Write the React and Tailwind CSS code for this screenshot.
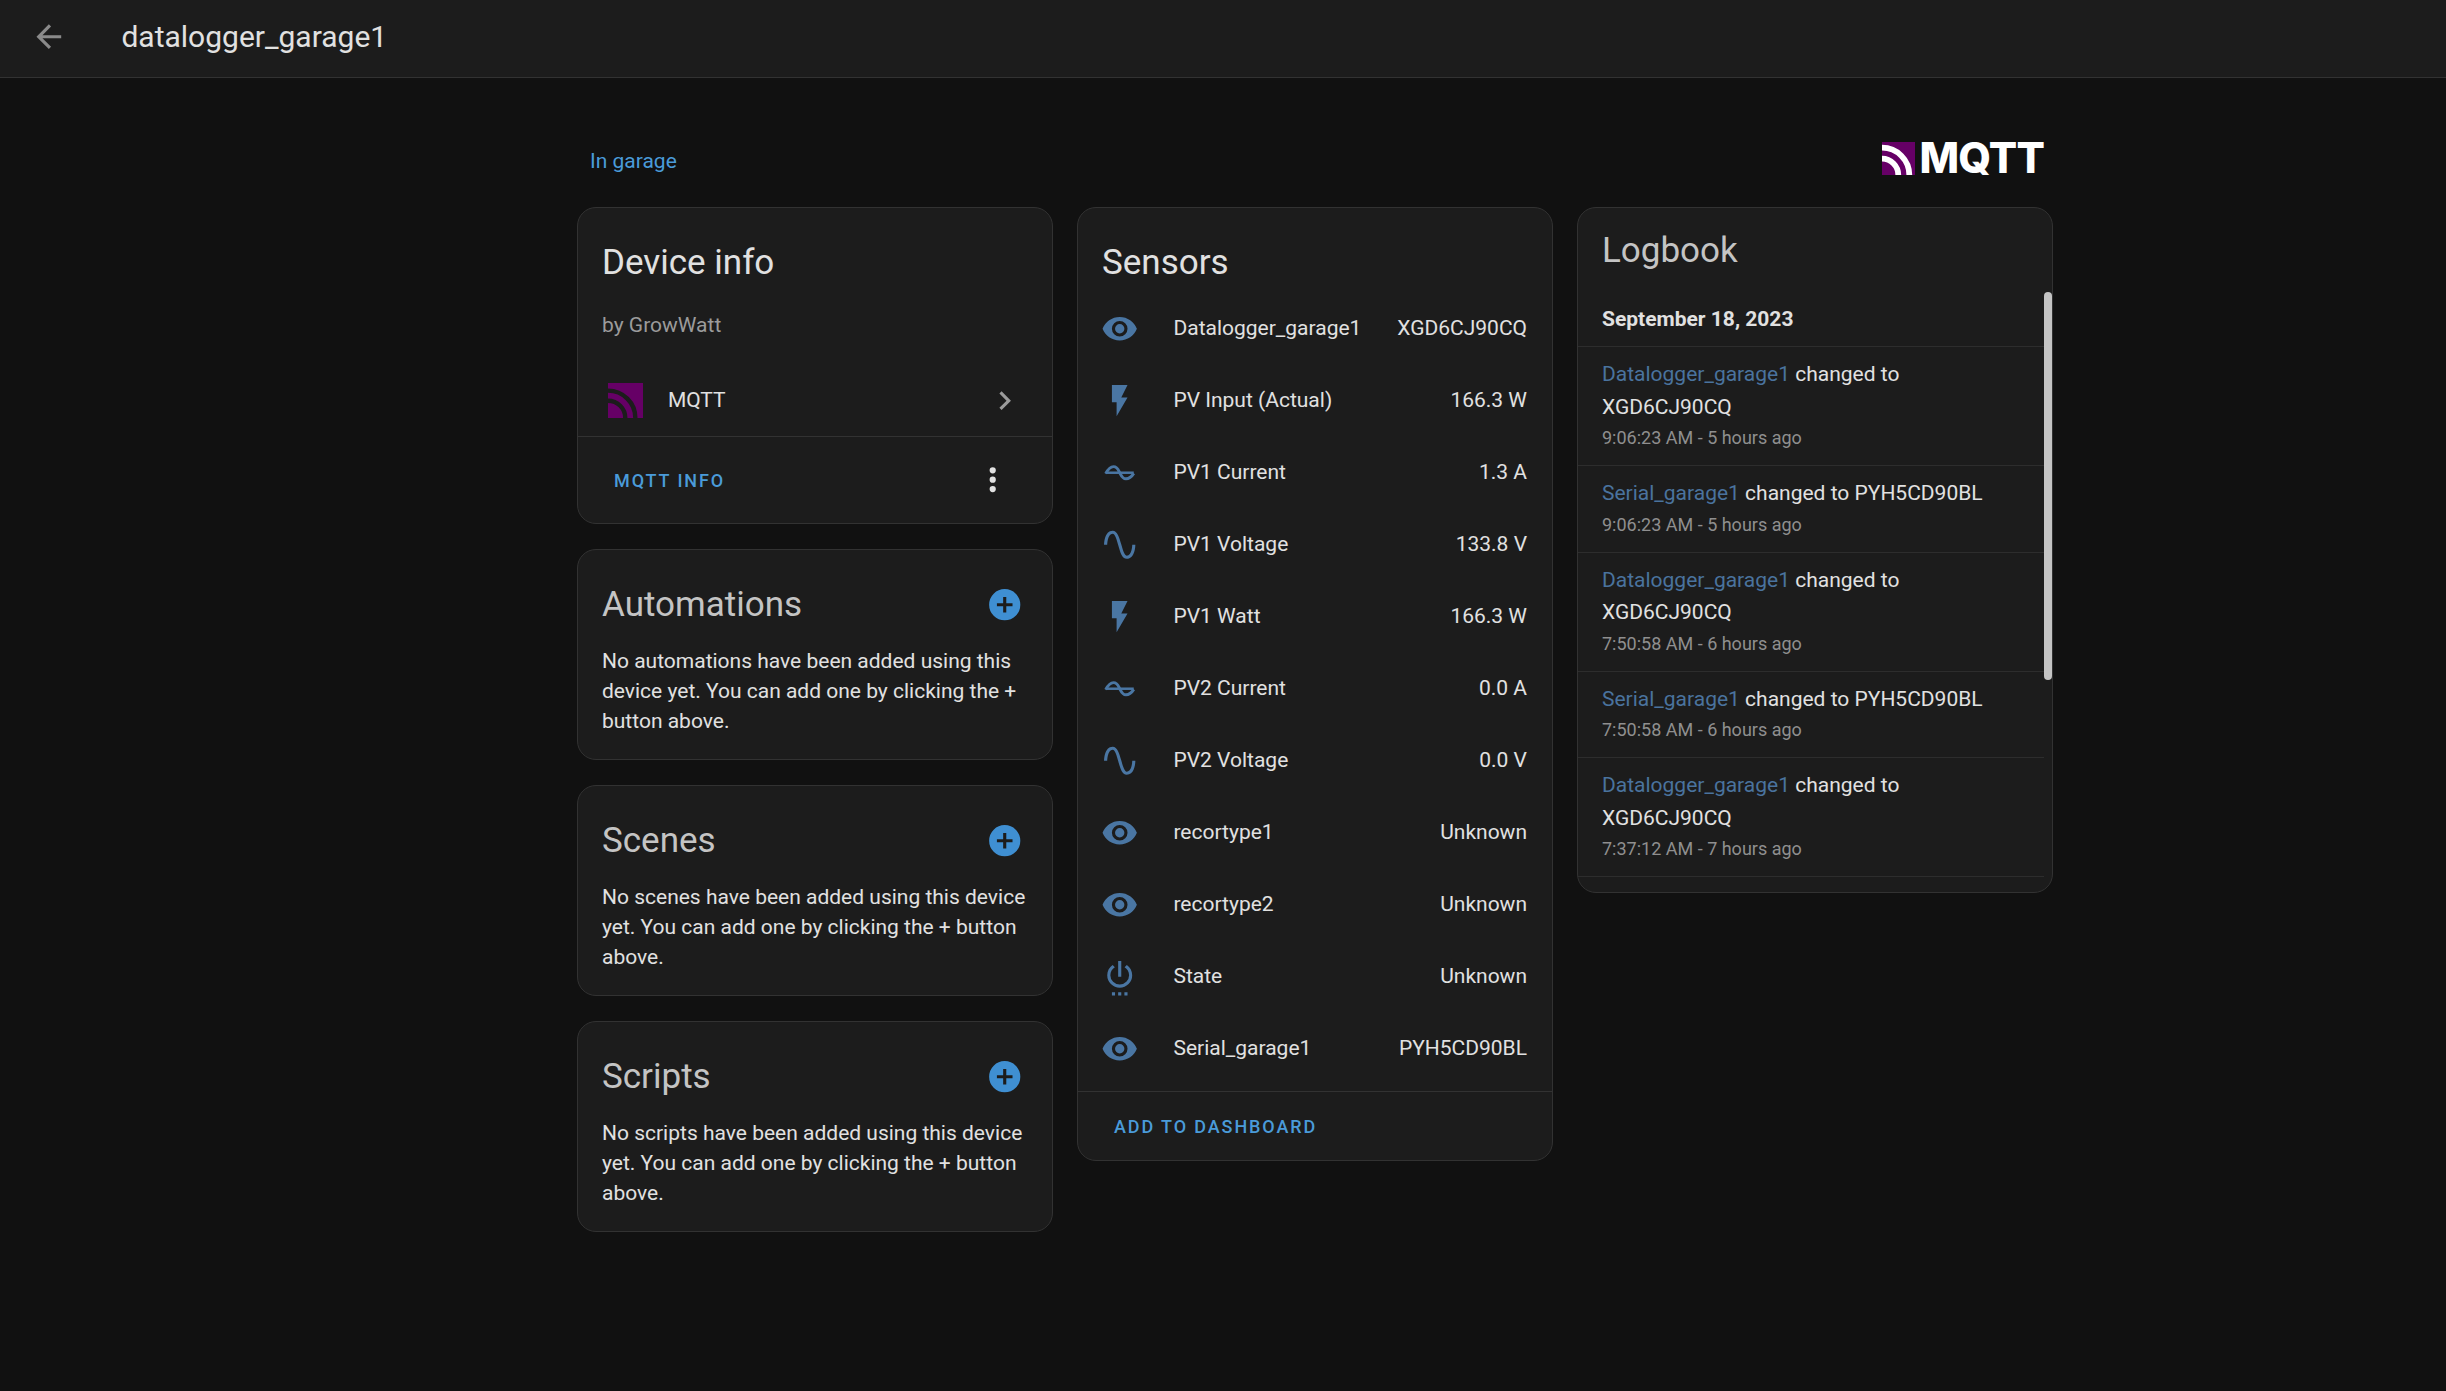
// Device page, dark theme. Sizes are the usual ones at about 1.5x.
const mdi = {
  arrowLeft: 'M20,11V13H8L13.5,18.5L12.08,19.92L4.16,12L12.08,4.08L13.5,5.5L8,11H20Z',
  chevron: 'M8.59,16.58L13.17,12L8.59,7.41L10,6L16,12L10,18L8.59,16.58Z',
  dots: 'M12,16A2,2 0 0,1 14,18A2,2 0 0,1 12,20A2,2 0 0,1 10,18A2,2 0 0,1 12,16M12,10A2,2 0 0,1 14,12A2,2 0 0,1 12,14A2,2 0 0,1 10,12A2,2 0 0,1 12,10M12,4A2,2 0 0,1 14,6A2,2 0 0,1 12,8A2,2 0 0,1 10,6A2,2 0 0,1 12,4Z',
  plus: 'M17,13H13V17H11V13H7V11H11V7H13V11H17M12,2A10,10 0 0,0 2,12A10,10 0 0,0 12,22A10,10 0 0,0 22,12A10,10 0 0,0 12,2Z',
  eye: 'M12,9A3,3 0 0,0 9,12A3,3 0 0,0 12,15A3,3 0 0,0 15,12A3,3 0 0,0 12,9M12,17A5,5 0 0,1 7,12A5,5 0 0,1 12,7A5,5 0 0,1 17,12A5,5 0 0,1 12,17M12,4.5C7,4.5 2.73,7.61 1,12C2.73,16.39 7,19.5 12,19.5C17,19.5 21.27,16.39 23,12C21.27,7.61 17,4.5 12,4.5Z',
  flash: 'M7,2V13H10V22L17,10H13L17,2H7Z',
  sine: 'M16.5,21C13.5,21 12.31,16.76 11.05,12.28C10.14,9.04 9,5 7.5,5C4.11,5 4,11.93 4,12H2C2,11.63 2.06,3 7.5,3C10.5,3 11.71,7.25 12.97,11.74C13.83,14.8 15,19 16.5,19C19.94,19 20.03,12.07 20.03,12H22.03C22.03,12.37 21.97,21 16.5,21Z',
  power: 'M15,24H17V22H15M16.56,4.44L15.11,5.89C16.84,6.94 18,8.83 18,11A6,6 0 0,1 12,17A6,6 0 0,1 6,11C6,8.83 7.16,6.94 8.88,5.88L7.44,4.44C5.36,5.88 4,8.28 4,11A8,8 0 0,0 12,19A8,8 0 0,0 20,11C20,8.28 18.64,5.88 16.56,4.44M13,2H11V12H13M11,24H13V22H11M7,24H9V22H7V24Z',
};

function Icon({ path, className }) {
  return (
    <svg viewBox="0 0 24 24" className={`w-[37.44px] h-[37.44px] shrink-0 fill-current ${className}`}>
      <path d={path} />
    </svg>
  );
}

// wave with its axis, not the same as the sine one
function CurrentIcon() {
  return (
    <svg viewBox="0 0 24 24" className="w-[37.44px] h-[37.44px] shrink-0 text-[#4a76a3]" fill="none" stroke="currentColor">
      <path strokeWidth="1.9" d="M3 12.6C4.6 9.6 6.2 8.1 8 8.1C10.8 8.1 11.4 11 12 12C12.7 13.2 13.6 15.9 16 15.9C17.9 15.9 19.6 14.6 21 12.4" />
      <path strokeWidth="1.6" d="M3 12H21" />
    </svg>
  );
}

function MqttMark({ arcs, outer, width, className }) {
  return (
    <svg viewBox="0 0 32 32" className={className}>
      <defs>
        <clipPath id={`sq-${arcs.slice(1)}`}>
          <rect width="32" height="32" />
        </clipPath>
      </defs>
      <rect width="32" height="32" fill="#660066" />
      <g clipPath={`url(#sq-${arcs.slice(1)})`} fill="none" stroke={arcs} strokeWidth={width}>
        <circle cx="0" cy="32" r="15.8" />
        <circle cx="0" cy="32" r={outer} />
      </g>
    </svg>
  );
}

const sensors = [
  { icon: mdi.eye, name: 'Datalogger_garage1', value: 'XGD6CJ90CQ' },
  { icon: mdi.flash, name: 'PV Input (Actual)', value: '166.3 W' },
  { current: true, name: 'PV1 Current', value: '1.3 A' },
  { icon: mdi.sine, name: 'PV1 Voltage', value: '133.8 V' },
  { icon: mdi.flash, name: 'PV1 Watt', value: '166.3 W' },
  { current: true, name: 'PV2 Current', value: '0.0 A' },
  { icon: mdi.sine, name: 'PV2 Voltage', value: '0.0 V' },
  { icon: mdi.eye, name: 'recortype1', value: 'Unknown' },
  { icon: mdi.eye, name: 'recortype2', value: 'Unknown' },
  { icon: mdi.power, name: 'State', value: 'Unknown' },
  { icon: mdi.eye, name: 'Serial_garage1', value: 'PYH5CD90BL' },
];

const logbook = [
  { link: 'Datalogger_garage1', value: 'XGD6CJ90CQ', time: '9:06:23 AM - 5 hours ago' },
  { link: 'Serial_garage1', value: 'PYH5CD90BL', time: '9:06:23 AM - 5 hours ago' },
  { link: 'Datalogger_garage1', value: 'XGD6CJ90CQ', time: '7:50:58 AM - 6 hours ago' },
  { link: 'Serial_garage1', value: 'PYH5CD90BL', time: '7:50:58 AM - 6 hours ago' },
  { link: 'Datalogger_garage1', value: 'XGD6CJ90CQ', time: '7:37:12 AM - 7 hours ago' },
];

const related = [
  { title: 'Automations', text: 'No automations have been added using this device yet. You can add one by clicking the + button above.' },
  { title: 'Scenes', text: 'No scenes have been added using this device yet. You can add one by clicking the + button above.' },
  { title: 'Scripts', text: 'No scripts have been added using this device yet. You can add one by clicking the + button above.' },
];

const card = 'bg-[#1c1c1c] border border-[#323232] rounded-[19px]';
const actionText = 'text-[18px] font-medium tracking-[0.105em] text-[#4a9bd9] uppercase';

export default function App() {
  return (
    <div className="min-h-screen bg-[#111111] text-[#e1e1e1] text-[21px] font-[family-name:Roboto,sans-serif]">
      {/* Toolbar */}
      <header className="h-[78px] pb-[4px] bg-[#1c1c1c] border-b border-[#323232] flex items-center pl-[30px]">
        <Icon path={mdi.arrowLeft} className="text-[#8a8a8a]" />
        <h1 className="ml-[54px] text-[30px] leading-none text-[#e1e1e1]">datalogger_garage1</h1>
      </header>

      <main className="ml-[577px] w-[1476px]">
        {/* Area link and integration logo */}
        <div className="h-[129px] pt-[64px] pl-[13px] pr-[9px] flex justify-between items-start">
          <a className="mt-[3px] leading-[32px] text-[#4a9bd9]">In garage</a>
          <div className="flex items-start gap-[4px]">
            <MqttMark arcs="#ffffff" outer="26.5" width="5.6" className="w-[33px] h-[33px]" />
            <span className="text-[42px] leading-[32px] font-extrabold tracking-[-0.02em] text-white font-[family-name:Inter,sans-serif]">MQTT</span>
          </div>
        </div>

        <div className="grid grid-cols-3 gap-[24px] items-start">
          {/* Left column */}
          <div className="flex flex-col gap-[25px]">
            <section className={card}>
              <h2 className="pt-[26px] pl-[24px] text-[35px] leading-[58px]">Device info</h2>
              <p className="mt-[17px] pl-[24px] leading-[32px] text-[#9b9b9b]">by GrowWatt</p>
              <div className="mt-[24px] h-[72px] flex items-center pl-[30px] pr-[29px] border-b border-[#323232]">
                <MqttMark arcs="#1c1c1c" outer="25" width="4" className="w-[35px] h-[35px]" />
                <span className="ml-[25px] flex-1">MQTT</span>
                <Icon path={mdi.chevron} className="text-[#9b9b9b]" />
              </div>
              <div className="h-[86px] flex items-center justify-between pl-[36px] pr-[41px]">
                <span className={actionText}>MQTT Info</span>
                <Icon path={mdi.dots} className="text-[#e1e1e1]" />
              </div>
            </section>

            {related.map((item) => (
              <section key={item.title} className={card}>
                <div className="pt-[26px] pl-[24px] pr-[29px] flex items-center justify-between">
                  <h2 className="text-[35px] leading-[58px] text-[#c4c4c4]">{item.title}</h2>
                  <Icon path={mdi.plus} className="text-[#3f8fd2]" />
                </div>
                <p className="mt-[12px] px-[24px] pb-[23px] leading-[30px]">{item.text}</p>
              </section>
            ))}
          </div>

          {/* Sensors */}
          <section className={card}>
            <h2 className="pt-[26px] pl-[24px] text-[35px] leading-[58px] mb-[1px]">Sensors</h2>
            <div className="pb-[6px] border-b border-[#323232]">
              {sensors.map((s) => (
                <div key={s.name} className="h-[72px] flex items-center pl-[23px] pr-[25px]">
                  {s.current ? <CurrentIcon /> : <Icon path={s.icon} className="text-[#4a76a3]" />}
                  <span className="ml-[35px] flex-1">{s.name}</span>
                  <span>{s.value}</span>
                </div>
              ))}
            </div>
            <div className="h-[68px] flex items-center pl-[36px]">
              <span className={actionText}>Add to dashboard</span>
            </div>
          </section>

          {/* Logbook */}
          <section className={`${card} relative pb-[15px]`}>
            <h2 className="pt-[14px] pl-[24px] text-[35px] leading-[58px] text-[#c4c4c4]">Logbook</h2>
            <div className="mt-[23px] mr-[8px]">
              <div className="pl-[24px] pb-[11px] leading-[32px] font-bold border-b border-[#2d2d2d]">September 18, 2023</div>
              {logbook.map((e, i) => (
                <div key={i} className="pl-[24px] pr-[20px] pt-[11px] pb-[12px] border-b border-[#2d2d2d]">
                  <p className="leading-[32.5px]">
                    <span className="text-[#4a739e]">{e.link}</span> changed to {e.value}
                  </p>
                  <p className="leading-[30px] text-[18px] text-[#8f8f8f]">{e.time}</p>
                </div>
              ))}
            </div>
            {/* scrollbar thumb */}
            <div className="absolute right-0 top-[84px] w-[8px] h-[388px] rounded-full bg-[#c4c4c4]" />
          </section>
        </div>
      </main>
    </div>
  );
}
